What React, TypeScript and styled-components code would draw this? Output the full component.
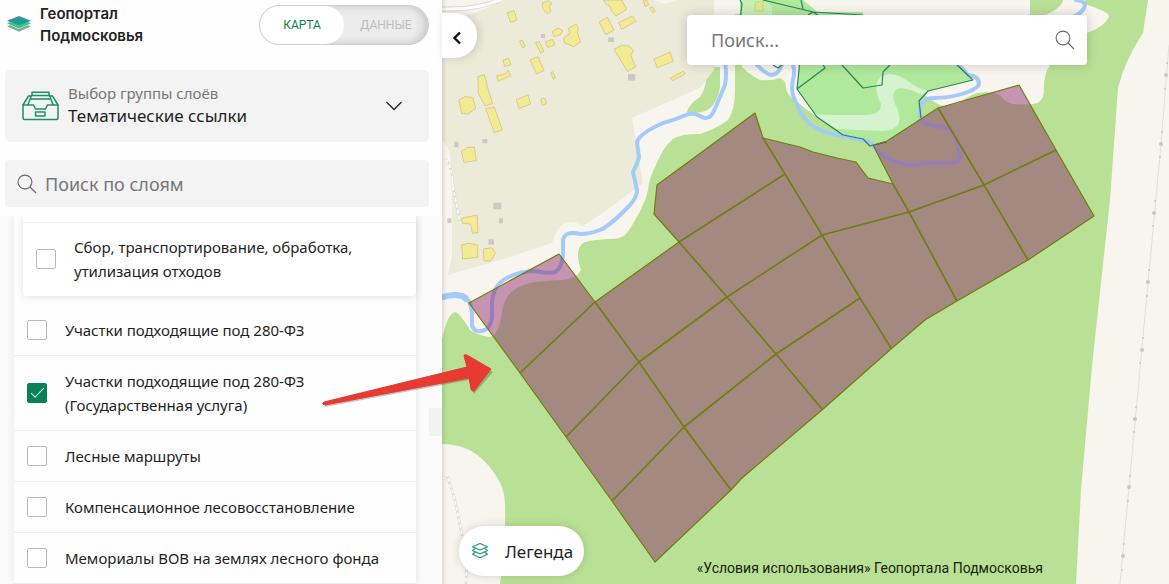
import React, { useState } from 'react';
import styled, { createGlobalStyle, css } from 'styled-components';

const GlobalStyle = createGlobalStyle`
  *, *::before, *::after { box-sizing: border-box; }
  body { margin: 0; background: #fff; }
  button, input, select { font-family: inherit; }
`;

const Page = styled.div`
  position: relative;
  display: flex;
  height: 100vh;
  overflow: hidden;
  color: #1f1f1f;
  font-family: 'Noto Sans', Roboto, sans-serif;
`;

/* ---------- sidebar ---------- */

const Sidebar = styled.aside`
  position: relative;
  display: flex;
  flex-direction: column;
  flex: 0 0 442px;
  background: #fefefe;
`;

const Header = styled.header`
  display: flex;
  justify-content: space-between;
  align-items: flex-start;
  height: 70px;
  padding: 3px 13px 0 5px;
`;

const Brand = styled.a`
  display: flex;
  gap: 7px;
  color: #222;
  font: 600 15px/22px Inter, sans-serif;
  text-decoration: none;
  svg { margin-top: 12px; }
`;

const Switch = styled.div`
  display: flex;
  width: 170px;
  height: 40px;
  margin-top: 2px;
  border: 1px solid #cfcfcf;
  border-radius: 20px;
  background: #ececec;
  box-shadow: inset -3px 0 8px #c4c4c4;
  overflow: hidden;
`;

const SwitchButton = styled.button<{ $active: boolean }>`
  flex: 1;
  padding: 0;
  border: 0;
  border-radius: 20px;
  background: ${(p) => (p.$active ? '#fff' : 'transparent')};
  color: ${(p) => (p.$active ? '#0c7f53' : '#bdbdbd')};
  font-family: Roboto, sans-serif;
  font-size: 12px;
`;

const GroupField = styled.label`
  position: relative;
  display: flex;
  align-items: center;
  gap: 9px;
  height: 72px;
  margin: 0 13px 18px 5px;
  padding: 0 26px 0 17px;
  border-radius: 5px;
  background: #f3f3f3;
`;

const GroupText = styled.span`
  display: flex;
  flex: 1;
  flex-direction: column;
  padding-bottom: 2px;
  color: #777;
  font-size: 15px;
  line-height: 22px;
`;

const GroupSelect = styled.select`
  appearance: none;
  height: 24px;
  padding: 0;
  border: 0;
  background: transparent;
  color: #1f1f1f;
  font-size: 17px;
  line-height: 24px;
`;

const SearchField = styled.label<{ $floating?: boolean }>`
  display: flex;
  align-items: center;
  gap: 8px;
  ${(p) =>
    p.$floating
      ? css`
          width: 400px;
          height: 50px;
          margin: 15px 82px 0 auto;
          padding: 0 12px 0 24px;
          border-radius: 4px;
          background: #fff;
          box-shadow: 0 0 12px rgba(0, 0, 0, 0.18);
        `
      : css`
          height: 47px;
          flex: none;
          margin: 0 13px 9px 5px;
          padding: 0 12px;
          border-radius: 4px;
          background: #f3f3f3;
        `}
`;

const SearchInput = styled.input`
  flex: 1;
  min-width: 0;
  padding: 0;
  border: 0;
  outline: 0;
  background: transparent;
  color: #333;
  font-size: 18px;
  line-height: 24px;
  &::placeholder { color: #777; opacity: 1; }
`;

const LayerScroll = styled.div`
  flex: 1;
  min-height: 0;
  padding: 0 26px 0 14px;
  overflow: hidden;
  background: #fbfbfb;
`;

const LayerPanel = styled.div`
  background: #fefefe;
  box-shadow: 0 0 8px rgba(0, 0, 0, 0.1);
`;

const SubLayers = styled.ul`
  margin: 0 0 9px 9px;
  padding: 6px 0 0;
  list-style: none;
  border-radius: 0 0 4px 4px;
  background: #fff;
  box-shadow: 0 1px 8px rgba(0, 0, 0, 0.12);
`;

const Layers = styled.ul`
  margin: 0;
  padding: 0;
  list-style: none;
`;

const LayerRow = styled.li<{ $nested?: boolean }>`
  padding: 13px;
  ${(p) =>
    p.$nested
      ? css`border-top: 1px solid #ededed; padding: 12px 13px 13px;`
      : css`border-bottom: 1px solid #ededed;`}
`;

const LayerLabel = styled.label`
  display: flex;
  align-items: center;
  gap: 18px;
  font-size: 15px;
  line-height: 24px;
  white-space: pre-line;
`;

const Tick = styled.input`
  appearance: none;
  flex: none;
  display: grid;
  place-items: center;
  width: 20px;
  height: 20px;
  margin: 0;
  border: 1px solid #b9b9b9;
  border-radius: 2px;
  background: #fff;
  &:checked { border-color: #0a8056; background: #0a8056; }
  &:checked::after {
    content: '';
    width: 13px;
    height: 6px;
    border: solid #d9f1e6;
    border-width: 0 0 1px 1px;
    transform: translateY(-2px) rotate(-45deg);
  }
`;

const ResizeHandle = styled.div`
  position: absolute;
  right: 0;
  top: 408px;
  width: 13px;
  height: 28px;
  background: #f2f2f2;
`;

/* ---------- map ---------- */

const MapArea = styled.main`
  position: relative;
  display: flex;
  flex: 1;
  flex-direction: column;
  justify-content: space-between;
  min-width: 0;
  background: #b9e195;
  &::before {
    content: '';
    position: absolute;
    z-index: 1;
    inset: 0 auto 0 0;
    width: 5px;
    background: linear-gradient(to right, rgba(0, 0, 0, 0.1), transparent);
  }
`;

const MapCanvas = styled.svg`
  position: absolute;
  inset: 0;
  width: 100%;
  height: 100%;
`;

const MapTop = styled.div`
  position: relative;
  z-index: 2;
  display: flex;
  align-items: flex-start;
`;

const CollapseButton = styled.button`
  display: grid;
  place-items: center;
  width: 35px;
  height: 45px;
  margin-top: 13px;
  padding: 4px 5px 0 0;
  border: 0;
  border-radius: 0 22px 22px 0;
  background: #fff;
  box-shadow: 2px 0 10px rgba(0, 0, 0, 0.15);
`;

const MapBottom = styled.div`
  position: relative;
  display: flex;
  align-items: flex-end;
  justify-content: space-between;
  padding: 0 126px 0 17px;
`;

const LegendButton = styled.button`
  display: flex;
  align-items: center;
  gap: 16px;
  width: 125px;
  height: 50px;
  margin-bottom: 8px;
  padding: 0 0 0 12px;
  border: 0;
  border-radius: 25px;
  background: #fff;
  box-shadow: 0 0 10px rgba(0, 0, 0, 0.15);
  color: #1f1f1f;
  font-size: 17px;
`;

const Terms = styled.a`
  margin-bottom: 5px;
  color: #16240c;
  font-family: Roboto, sans-serif;
  font-size: 14px;
  line-height: 22px;
  text-decoration: none;
`;

const Pointer = styled.svg`
  position: absolute;
  z-index: 3;
  left: 318px;
  top: 350px;
  pointer-events: none;
`;

/* ---------- drawings ---------- */

const Magnifier = ({ size }: { size: number }) => (
  <svg width={size} height={size} viewBox="0 0 20 20" fill="none" stroke="#666" strokeWidth="1.1" aria-hidden="true">
    <circle cx="8" cy="8" r="6.9" />
    <path d="M13 13L19 19" />
  </svg>
);

const BrandMark = () => (
  <svg width="28" height="18" viewBox="0 0 28 18" aria-hidden="true">
    <defs>
      <linearGradient id="brandTop" x1="0" x2="0" y1="0" y2="1">
        <stop offset="0" stopColor="#3f8fa8" />
        <stop offset="1" stopColor="#12a377" />
      </linearGradient>
    </defs>
    <path d="M2 11.2L14 16.8L26 11.2L23 10L14 14L5 10Z" fill="#7fae8e" />
    <path d="M2 8.2L14 13.4L26 8.2L22.5 7L14 10.8L5.5 7Z" fill="#2fc79a" />
    <path d="M2 5.8L14 1L26 5.8L14 10.8Z" fill="url(#brandTop)" />
  </svg>
);

const DrawerIcon = () => (
  <svg width="37" height="30" viewBox="0 0 37 30" fill="none" stroke="#1c8f68" strokeWidth="1.5" strokeLinejoin="round" strokeLinecap="round" aria-hidden="true">
    <path d="M1 14H11.5L13.5 18H23.5L25.5 14H36V27Q36 28.5 34.5 28.5H2.5Q1 28.5 1 27Z" />
    <path d="M1 14L6.5 5H9M36 14L30.5 5H28" />
    <path d="M6 13.5L9.5 4.5H27.5L31 13.5" />
    <path d="M10 4V1.2H27V4M9 8H28" />
    <rect x="13.5" y="21" width="9.5" height="4" />
  </svg>
);

const LegendIcon = () => (
  <svg width="18" height="18" viewBox="0 0 18 18" fill="none" stroke="#21966c" strokeWidth="1.1" strokeLinejoin="round" aria-hidden="true">
    <path d="M9 1.5L16.5 4.8L9 8L1.5 4.8Z" />
    <path d="M4.5 6.3L1.5 8.4L9 11.8L16.5 8.4L13.5 6.3" />
    <path d="M4.5 10L1.5 12.3L9 15.8L16.5 12.3L13.5 10" />
  </svg>
);

const northBuildings = [
  '202,38 222,32 231,60 212,68', '306,10 325,2 335,10 328,20 333,34 322,42 310,28',
  '490,0 545,0 560,28 528,48 515,35 510,20 497,10', '478,66 502,52 522,90 497,104',
  '536,68 578,48 588,64 545,88', '522,148 545,136 568,138 580,152 572,166 587,200 562,214',
  '642,178 690,156 700,184 652,203', '691,234 730,214 736,222 698,242',
  '370,115 390,100 385,85 408,72 415,85 413,100 422,125 402,140 375,130',
  '337,95 355,84 368,92 362,104 342,110', '287,128 297,124 312,154 302,160',
  '316,126 338,118 345,134 323,143', '239,124 247,120 256,138 248,144',
  '189,180 206,175 213,194 194,200', '170,228 195,222 205,210 213,228 190,236 174,245',
  '270,180 294,170 312,212 290,222', '332,218 338,215 346,234 340,238',
  '114,230 133,224 145,270 158,310 135,318 115,280', '137,326 163,321 187,390 163,398',
  '56,300 75,290 98,292 107,325 85,342 65,340', '229,300 264,284 272,312 238,326',
  '302,297 314,294 320,310 307,316', '64,455 80,443 103,441 109,482 72,487',
  '610,0 620,0 626,14 615,20', '629,24 636,20 646,34 639,38',
];

const southBuildings = [
  '65,115 112,105 114,158 97,160 92,132 68,130',
  '65,195 85,190 113,195 113,232 68,237',
  '130,207 155,203 166,218 160,232 152,243 132,243',
];

const sheds = [
  [505, 112, 17, 14], [303, 102, 12, 12], [564, 222, 22, 20], [127, 417, 15, 13], [43, 425, 12, 17],
  [160, 608, 24, 20], [177, 655, 12, 15], [145, 718, 17, 16], [22, 655, 12, 14],
];

const pylons = [
  [1167, 63, 1], [1166, 75, 2], [1165, 89, 1], [1162, 132, 1], [1161, 144, 2], [1160, 157, 1],
  [1155, 201, 1], [1154, 213, 2], [1153, 226, 1], [1149, 270, 1], [1148, 282, 2], [1147, 296, 1],
  [1143, 338, 1], [1142, 350, 2], [1140, 363, 1], [1136, 407, 1], [1135, 419, 2], [1134, 432, 1],
  [1130, 476, 1], [1129, 487, 2], [1128, 501, 1], [1124, 544, 1], [1123, 556, 2], [1122, 570, 1],
];

const ForestMap = () => (
  <MapCanvas viewBox="442 0 727 584" preserveAspectRatio="xMinYMin slice" role="img" aria-label="Карта лесных участков">
    <rect x="442" width="727" height="584" fill="#b9e195" />
    <g fill="#f8f5ee">
      <path d="M1148 0L1143 33Q1125 60 1118 88L1110 200L1092 366L1081 490L1076 584H1169V0Z" />
      <path d="M442 0H742V67Q750 75 760 80Q772 81 780 78Q786 80 786 88Q787 95 797 102L817 117L900 90L925 95Q935 104 944 106L960 103Q970 93 985 92Q993 92 1000 95Q1006 103 1013 104Q1024 105 1033 104Q1043 103 1044 92Q1043 75 1050 65L1087 33Q1104 27 1109 17Q1110 12 1085 4V0H1063Q1062 8 1045 15H1030V0H803L817 12L735 14V90Q735 110 728 120Q716 129 700 134Q680 134 673 139Q663 147 656 165Q649 178 648 190Q644 208 627 233Q622 239 610 239Q588 240 583 243Q574 250 581 270Q577 278 563 280Q540 281 530 283Q514 287 507 297Q503 304 500 323Q496 337 489 337Q477 335 470 330Q459 312 455 312Q447 314 442 340Z" />
      <path d="M442 444Q465 444 481 458Q505 480 505 505Q506 550 500 584H442Z" />
    </g>
    <path d="M707 67H720V87Q719 97 713 105Q706 115 687 112Q689 104 700 97Q707 88 707 67Z" fill="#b9e195" />
    <path d="M442 20Q470 18 503 0H714V70L700 88L632 118L643 183L607 210L583 226Q573 220 566 223Q558 225 552 243L507 258L448 275L452 255V180L450 155Q449 146 442 142Z" fill="#ecebd9" />
    <path d="M653 0H677L665 4Z" fill="#f8f5ee" />
    <path d="M442 9Q476 10 500 0" fill="none" stroke="#d9d7d0" strokeWidth="5" />
    <path d="M442 9Q476 10 500 0" fill="none" stroke="#fff" strokeWidth="3" />
    <g fill="none" stroke="#dedad4" strokeWidth="2.5">
      <path d="M445 160Q452 162 453 190M452 180L460 223M442 478H448L455 500L461 530L467 560L466 584" />
    </g>
    <g fill="none" stroke="#fff" strokeWidth="1.5" strokeDasharray="4 2">
      <path d="M445 160Q452 162 453 190M452 180L460 223M442 478H448L455 500L461 530L467 560L466 584" />
    </g>

    <g transform="translate(440 0) scale(0.3333)" fill="#f2eb93" stroke="#d9c98a" strokeWidth="3">
      {northBuildings.map((points) => <polygon key={points} points={points} />)}
      <g transform="translate(0 540)">
        {southBuildings.map((points) => <polygon key={points} points={points} />)}
      </g>
      <g fill="#cbc9c1" stroke="none">
        {sheds.map(([x, y, w, h]) => <rect key={`${x}-${y}`} x={x} y={y} width={w} height={h} />)}
      </g>
    </g>

    <path d="M740 0H803L817 12H863V40H960L957 65L973 80L928 91L919 101L921 118L900 133L887 142L873 145L863 139L843 135L817 117L797 89L800 60L740 20Z" fill="#b0e89c" />
    <path d="M742 0H762L772 6V30H742Z" fill="#c9efb4" />
    <rect x="755" y="2" width="8" height="9" fill="#dcea86" stroke="#c3d688" />
    <path d="M812 112Q818 115 830 115H868Q881 114 881 104Q876 94 876 87Q877 75 890 74Q900 75 908 81Q918 89 928 91L922 95Q905 86 897 89Q890 94 895 104Q901 115 899 123Q896 130 883 131L837 129L817 117Z" fill="#d5f3cf" />

    <g fill="none" stroke="#a3caf8" strokeWidth="4" strokeLinejoin="round" strokeLinecap="round">
      <path d="M725 60Q727 75 725 85L720 97L713 113Q708 121 700 116Q693 112 686 115Q677 119 663 123Q640 133 637 142Q638 150 639 157Q638 162 633 172L637 190Q637 197 630 205Q610 226 600 230Q590 234 580 234Q564 230 563 241V255Q562 268 555 272Q548 274 535 271Q520 271 507 278Q493 285 492 303V318Q490 328 485 330Q474 334 472 325V313Q470 298 463 295" />
      <path d="M466 299Q460 292 442 297" strokeWidth="6" />
      <path d="M757 65Q765 73 771 75Q779 75 783 62" />
      <path d="M790 60Q795 66 794 75Q790 90 794 98Q801 116 810 124Q819 131 833 134L863 140Q872 142 875 149Q885 160 900 163Q910 166 920 164Q940 162 950 163Q960 163 960 155Q959 145 953 133Q947 126 935 126Q923 124 920 118V106Q924 98 934 98Q952 98 968 92Q978 88 979 84Q979 76 968 75L960 66" />
      <path d="M1070 18Q1084 13 1085 5Q1084 1 1076 0" />
    </g>

    <g fill="none" stroke="#26865a" strokeWidth="1.2" strokeLinejoin="round">
      <path d="M740 0L742 4L740 20M763 0L813 12L863 15M801 0L803 9M808 15L813 12L818 15" />
      <path d="M800 60L797 89L817 117L843 135L863 139L870 146L887 142M921 118L919 101L928 91L973 80L955 63M822 63L825 68L797 89M842 65L863 88L882 85L883 72L890 65M773 65L778 68L782 65" />
    </g>

    <path d="M1169 45L1161 144L1120 584" fill="none" stroke="#e2dfda" />
    <g fill="#c9c6c1">
      {pylons.map(([x, y, r]) => <circle key={y} cx={x} cy={y} r={r} />)}
    </g>

    <g stroke="#727d0c" strokeWidth="1.6" strokeLinejoin="round">
      <path
        d="M755 113L763 138L800 147L813 152L837 158L856 162L868 178L893 184L873 145L887 141L938 108L1019 85L1056 150L1094 216L1028 260L957 301L925 320L891 349L822 410L742 478L731 490L655 562L612 501L566 437L520 373L469 303L559 254L595 302L679 242L654 214L657 185Z"
        fill="rgba(138, 32, 102, 0.45)"
        strokeWidth="1.2"
      />
      <path
        d="M520 373L595 302M679 242L785 174M566 437L639 362L727 297L822 235L909 212L984 185L1056 150M612 501L684 427L776 354L860 298M595 302L639 362L684 427L731 490M679 242L727 297L776 354L822 409M763 138L785 174L822 235L860 298L891 348M893 184L909 212L957 301M938 108L984 185L1028 260"
        fill="none"
      />
    </g>
  </MapCanvas>
);

/* ---------- data ---------- */

interface Layer { id: string; label: string }

const nestedLayers: Layer[] = [
  { id: 'waste', label: 'Сбор, транспортирование, обработка,\nутилизация отходов' },
];

const layers: Layer[] = [
  { id: 'fz280', label: 'Участки подходящие под 280-ФЗ' },
  { id: 'fz280-service', label: 'Участки подходящие под 280-ФЗ\n(Государственная услуга)' },
  { id: 'routes', label: 'Лесные маршруты' },
  { id: 'restoration', label: 'Компенсационное лесовосстановление' },
  { id: 'memorials', label: 'Мемориалы ВОВ на землях лесного фонда' },
];

export default function App() {
  const [mode, setMode] = useState<'map' | 'data'>('map');
  const [selected, setSelected] = useState<string[]>(['fz280-service']);
  const toggle = (id: string) =>
    setSelected((ids) => (ids.includes(id) ? ids.filter((i) => i !== id) : [...ids, id]));

  const renderLayer = (layer: Layer, nested = false) => (
    <LayerRow key={layer.id} $nested={nested}>
      <LayerLabel>
        <Tick type="checkbox" checked={selected.includes(layer.id)} onChange={() => toggle(layer.id)} />
        {layer.label}
      </LayerLabel>
    </LayerRow>
  );

  return (
    <Page>
      <GlobalStyle />
      <Sidebar>
        <Header>
          <Brand href="#">
            <BrandMark />
            <span>Геопортал<br />Подмосковья</span>
          </Brand>
          <Switch>
            <SwitchButton type="button" $active={mode === 'map'} onClick={() => setMode('map')}>КАРТА</SwitchButton>
            <SwitchButton type="button" $active={mode === 'data'} onClick={() => setMode('data')}>ДАННЫЕ</SwitchButton>
          </Switch>
        </Header>
        <GroupField>
          <DrawerIcon />
          <GroupText>
            Выбор группы слоёв
            <GroupSelect defaultValue="links">
              <option value="links">Тематические ссылки</option>
            </GroupSelect>
          </GroupText>
          <svg width="18" height="10" viewBox="0 0 18 10" fill="none" stroke="#222" strokeWidth="1.3" aria-hidden="true">
            <path d="M1.5 1L9 8.5L16.5 1" />
          </svg>
        </GroupField>
        <SearchField>
          <Magnifier size={20} />
          <SearchInput type="text" placeholder="Поиск по слоям" aria-label="Поиск по слоям" />
        </SearchField>
        <LayerScroll>
          <LayerPanel>
            <SubLayers>{nestedLayers.map((layer) => renderLayer(layer, true))}</SubLayers>
            <Layers>{layers.map((layer) => renderLayer(layer))}</Layers>
          </LayerPanel>
        </LayerScroll>
        <ResizeHandle />
      </Sidebar>
      <MapArea>
        <ForestMap />
        <MapTop>
          <CollapseButton type="button" aria-label="Свернуть панель">
            <svg width="10" height="14" viewBox="0 0 10 14" fill="none" stroke="#111" strokeWidth="2.4" aria-hidden="true">
              <path d="M8 1.5L2.5 7L8 12.5" />
            </svg>
          </CollapseButton>
          <SearchField $floating>
            <SearchInput type="text" placeholder="Поиск..." aria-label="Поиск" />
            <Magnifier size={20} />
          </SearchField>
        </MapTop>
        <MapBottom>
          <LegendButton type="button"><LegendIcon />Легенда</LegendButton>
          <Terms href="#">«Условия использования» Геопортала Подмосковья</Terms>
        </MapBottom>
      </MapArea>
      <Pointer width="180" height="64" viewBox="318 350 180 64" aria-hidden="true">
        <path d="M324 405L468 378L473 392L492 370L464 356L467 368L324 403Z" transform="translate(1 2)" fill="rgba(0,0,0,.22)" />
        <path d="M324 402L467 367L464 356Q464 354 467 355L491 369L474 391Q472 392 471 389L469 378L325 405Q321 404 324 402Z" fill="#e53b31" stroke="#e53b31" strokeLinejoin="round" />
      </Pointer>
    </Page>
  );
}
